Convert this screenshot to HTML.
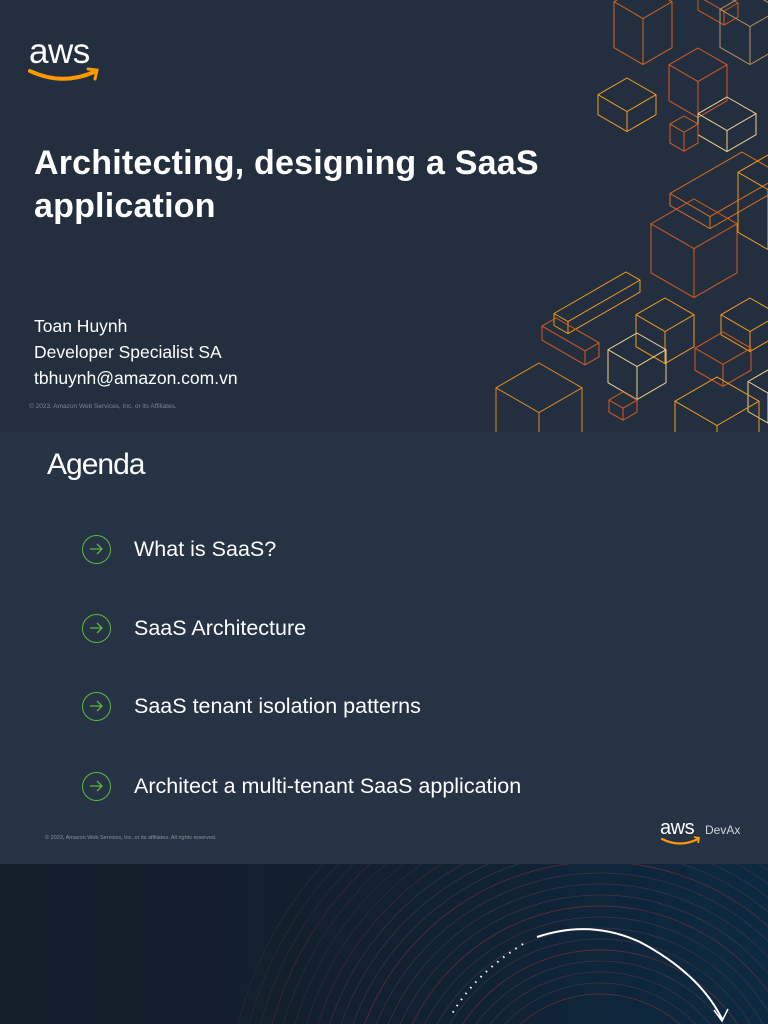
<!DOCTYPE html>
<html><head><meta charset="utf-8"><style>
*{margin:0;padding:0;box-sizing:border-box}
html,body{width:768px;height:1024px;overflow:hidden}
body{background:#232f3e;font-family:"Liberation Sans",sans-serif;position:relative}
svg{display:block}
.s1{position:absolute;left:0;top:0;width:768px;height:432px;background:#232f3e;overflow:hidden}
.s2{position:absolute;left:0;top:432px;width:768px;height:432px;background:#263345;overflow:hidden}
.s3{position:absolute;left:0;top:864px;width:768px;height:160px;background:linear-gradient(90deg,#151e2b 0%,#12202f 45%,#0d2940 100%);overflow:hidden}
.t{position:absolute;color:#fff;white-space:nowrap}
.item{position:absolute;left:82px;height:30px;display:flex;align-items:center}
.item .c{width:29px;height:29px;border:1.5px solid #5ab93a;border-radius:50%;position:relative}
.item span{position:absolute;left:52px;color:#fff;font-size:21.5px;white-space:nowrap}
</style></head><body>
<div class="s1">
<svg width="768" height="432" style="position:absolute;left:0;top:0" id="cubes" fill="none" stroke-width="1"></svg>
<svg style="position:absolute;left:28px;top:34px" width="76" height="50" viewBox="0 0 76 50">
<text x="1" y="29" fill="#fff" font-family="Liberation Sans" font-size="35" letter-spacing="-0.5">aws</text>
<path d="M2 37 Q34 52 66 38" stroke="#ff9900" stroke-width="4" fill="none" stroke-linecap="round"/>
<path d="M60 35 L69 36 L67 45" stroke="#ff9900" stroke-width="3" fill="none" stroke-linecap="round"/>
</svg>
<div class="t" style="left:34px;top:142px;font-size:34px;font-weight:bold;line-height:43px;letter-spacing:0.2px">Architecting, designing a SaaS<br>application</div>
<div class="t" style="left:34px;top:313px;font-size:17.5px;line-height:26px">Toan Huynh<br>Developer Specialist SA<br>tbhuynh@amazon.com.vn</div>
<div class="t" style="left:29px;top:403px;font-size:6.5px;color:#7a8593">© 2023, Amazon Web Services, Inc. or its Affiliates.</div>
</div>
<div class="s2">
<div class="t" style="left:47px;top:16px;font-size:30px;letter-spacing:-1px">Agenda</div>
<div class="item" style="top:102px"><div class="c"><svg width="26" height="26" style="position:absolute;left:0;top:0"><path d="M7 13 H19 M14 8 L19 13 L14 18" stroke="#5ab93a" stroke-width="1.3" fill="none"/></svg></div><span>What is SaaS?</span></div>
<div class="item" style="top:181px"><div class="c"><svg width="26" height="26" style="position:absolute;left:0;top:0"><path d="M7 13 H19 M14 8 L19 13 L14 18" stroke="#5ab93a" stroke-width="1.3" fill="none"/></svg></div><span>SaaS Architecture</span></div>
<div class="item" style="top:259px"><div class="c"><svg width="26" height="26" style="position:absolute;left:0;top:0"><path d="M7 13 H19 M14 8 L19 13 L14 18" stroke="#5ab93a" stroke-width="1.3" fill="none"/></svg></div><span>SaaS tenant isolation patterns</span></div>
<div class="item" style="top:339px"><div class="c"><svg width="26" height="26" style="position:absolute;left:0;top:0"><path d="M7 13 H19 M14 8 L19 13 L14 18" stroke="#5ab93a" stroke-width="1.3" fill="none"/></svg></div><span>Architect a multi-tenant SaaS application</span></div>
<div class="t" style="left:45px;top:403px;font-size:5.5px;color:#8a94a0">© 2023, Amazon Web Services, Inc. or its affiliates. All rights reserved.</div>
<svg style="position:absolute;left:660px;top:386px" width="50" height="30">
<text x="0" y="16" fill="#fff" font-family="Liberation Sans" font-size="20" letter-spacing="-0.5">aws</text>
<path d="M2 21 Q20 30 38 21" stroke="#ff9900" stroke-width="2.2" fill="none" stroke-linecap="round"/>
<path d="M34 19 L39 20 L38 25" stroke="#ff9900" stroke-width="1.8" fill="none"/>
</svg>
<div class="t" style="left:705px;top:391px;font-size:12px;color:#d0d5db">DevAx</div>
</div>
<div class="s3">
<svg width="768" height="160" id="arcs" fill="none"></svg>
</div>
<script>
var S=document.getElementById('cubes'),k=0.577;
function box(x,y,p,q,h,col){
 var T=[x,y],R=[x+p,y+k*p],B=[x+p-q,y+k*(p+q)],L=[x-q,y+k*q];
 var f=function(a){return a[0].toFixed(1)+','+a[1].toFixed(1)};
 var d='M'+f(T)+'L'+f(R)+'L'+f([R[0],R[1]+h])+'L'+f([B[0],B[1]+h])+'L'+f([L[0],L[1]+h])+'L'+f(L)+'Z M'+f(L)+'L'+f(B)+'L'+f(R)+' M'+f(B)+'L'+f([B[0],B[1]+h]);
 var e=document.createElementNS('http://www.w3.org/2000/svg','path');
 e.setAttribute('d',d);e.setAttribute('stroke',col);S.appendChild(e);
}
box(643,-15,29,29,46,'#d8641c');
box(712,-12,26,14,14,'#d0581e');
box(750,-8,30,30,38,'#b89060');
box(698,48,29,29,36,'#d85a1e');
box(627,78,29,29,20,'#f09a20');
box(727,97,29,29,21,'#efcf90');
box(684,116,14,14,19,'#d85a1e');
box(742,152,40,72,12,'#e07020');
box(768,155,30,30,60,'#f09a20');
box(694,199,43,43,49,'#d85a1e');
box(626,272,14,72,12,'#f09a20');
box(556,318,43,14,14,'#d85a1e');
box(665,298,29,29,32,'#f09a20');
box(750,298,29,29,20,'#f09a20');
box(637,333,29,29,33,'#efcf90');
box(723,332,28,28,22,'#d85a1e');
box(768,370,20,20,30,'#efcf90');
box(539,363,43,43,80,'#e08a20');
box(623,392,14,14,12,'#d85a1e');
box(717,377,42,42,60,'#f09a20');
var A=document.getElementById('arcs'),ns='http://www.w3.org/2000/svg';
for(var i=0;i<24;i++){var r=120+i*11;var c=document.createElementNS(ns,'circle');
 c.setAttribute('cx',600);c.setAttribute('cy',250);c.setAttribute('r',r);
 c.setAttribute('stroke',i%4==0?'#8a2f3a':'#4f3a48');c.setAttribute('stroke-width','0.7');c.setAttribute('opacity',i>15?0.45:0.75);A.appendChild(c);}
var p=document.createElementNS(ns,'path');
p.setAttribute('d','M537 73 Q590 55 640 78 Q700 110 722 155');p.setAttribute('stroke','#fff');p.setAttribute('stroke-width','2');A.appendChild(p);
var p2=document.createElementNS(ns,'path');
p2.setAttribute('d','M714 146 L722 157 L728 145');p2.setAttribute('stroke','#fff');p2.setAttribute('stroke-width','1.5');A.appendChild(p2);
var p3=document.createElementNS(ns,'path');
p3.setAttribute('d','M523 80 Q475 110 452 150');p3.setAttribute('stroke','#fff');p3.setAttribute('stroke-width','2');p3.setAttribute('stroke-dasharray','1.5 6');A.appendChild(p3);
</script>
</body></html>
